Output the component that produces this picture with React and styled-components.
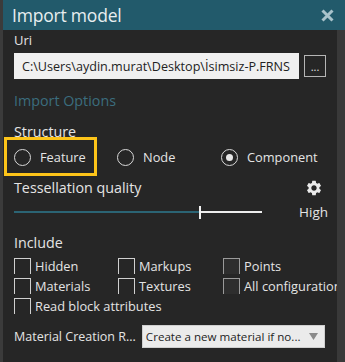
import React from "react";
import styled, { createGlobalStyle } from "styled-components";

const Global = createGlobalStyle`
  html, body { margin: 0; padding: 0; background: #262626; }
  * { box-sizing: border-box; }
`;

const Window = styled.div`
  width: 345px;
  height: 362px;
  overflow: hidden;
  display: flex;
  flex-direction: column;
  background: #262626;
  font-family: "Open Sans", "Noto Sans", sans-serif;
  color: #e2e2e2;
  border-left: 3px solid #3b3b3b;
`;

const Header = styled.div`
  height: 30px;
  flex: none;
  background: #225a6b;
  display: flex;
  align-items: center;
  justify-content: space-between;
  margin-left: -3px;
  padding: 0 11px 0 12px;
`;

const Title = styled.div`
  font-size: 17.5px;
  color: #e8eef0;
  letter-spacing: -0.2px;
`;

const BodyWrap = styled.div`
  flex: 1;
  display: flex;
  min-height: 0;
`;

const Body = styled.div`
  flex: 1;
  min-width: 0;
  padding: 1px 0 0 11px;
  display: flex;
  flex-direction: column;
  overflow: hidden;
`;

const ScrollStrip = styled.div`
  width: 8px;
  flex: none;
  background: #393939;
`;

const Label = styled.div`
  font-size: ${(p) => p.size || 14}px;
  color: ${(p) => p.color || "#e4e4e4"};
  line-height: ${(p) => p.lh || 18}px;
  margin-top: ${(p) => p.mt || 0}px;
  white-space: nowrap;
`;

const UriRow = styled.div`
  display: flex;
  align-items: center;
  gap: 5px;
  margin-top: 4px;
`;

const UriInput = styled.div`
  width: 285px;
  height: 26px;
  background: #f0f0f0;
  color: #222;
  font-size: 12.6px;
  display: flex;
  align-items: center;
  padding-left: 8px;
  white-space: nowrap;
  overflow: hidden;
`;

const BrowseBtn = styled.div`
  width: 22px;
  height: 22px;
  border: 1px solid #b5b5b5;
  color: #e0e0e0;
  font-size: 11px;
  display: flex;
  align-items: flex-end;
  justify-content: center;
  padding-bottom: 4px;
  line-height: 1;
`;

const RadioRow = styled.div`
  display: flex;
  align-items: center;
  height: 26px;
  margin-top: 2px;
`;

const RadioItem = styled.div`
  display: flex;
  align-items: center;
  gap: 9px;
  width: ${(p) => p.w}px;
  font-size: 12.8px;
  color: #e4e4e4;
  position: relative;
  height: 100%;
`;

const Highlight = styled.div`
  position: absolute;
  left: -10px;
  top: -7px;
  width: 93px;
  height: 39px;
  border: 3px solid #fcc419;
  pointer-events: none;
`;

const RadioCircle = styled.span`
  width: 17px;
  height: 17px;
  border-radius: 50%;
  border: 1.5px solid #d8d8d8;
  display: inline-flex;
  align-items: center;
  justify-content: center;
  flex: none;
  &::after {
    content: "";
    width: 7px;
    height: 7px;
    border-radius: 50%;
    background: #e8e8e8;
    display: ${(p) => (p.checked ? "block" : "none")};
  }
`;

const TessRow = styled.div`
  display: flex;
  justify-content: space-between;
  align-items: center;
  margin-top: 8px;
  padding-right: 14px;
`;

const SliderRow = styled.div`
  display: flex;
  align-items: center;
  justify-content: space-between;
  height: 20px;
  margin-top: 4px;
  padding-right: 9px;
`;

const Slider = styled.div`
  width: 248px;
  height: 14px;
  display: flex;
  align-items: center;
`;

const TrackFill = styled.div`
  height: 2px;
  background: #2b6474;
`;

const TrackRest = styled.div`
  height: 2px;
  flex: 1;
  background: #ededed;
`;

const Thumb = styled.div`
  width: 2px;
  height: 13px;
  background: #f2f2f2;
  flex: none;
`;

const CheckGrid = styled.div`
  display: grid;
  grid-template-columns: 104px 105px 1fr;
  row-gap: 4px;
  margin-top: 5px;
`;

const CheckItem = styled.div`
  display: flex;
  align-items: center;
  gap: 4px;
  height: 16px;
  font-size: 12.8px;
  color: #e4e4e4;
  white-space: nowrap;
  overflow: hidden;
  grid-column: ${(p) => p.span || "auto"};
`;

const Box = styled.span`
  width: 17px;
  height: 17px;
  border: 1px solid;
  flex: none;
  background: ${(p) => (p.dim ? "#2e2e2e" : "transparent")};
  border-color: ${(p) => (p.dim ? "#9a9a9a" : "#d0d0d0")};
`;

const MatRow = styled.div`
  display: flex;
  align-items: center;
  gap: 6px;
  margin-top: 11px;
`;

const Select = styled.div`
  width: 183px;
  height: 23px;
  background: #ebebeb;
  border: 1px solid #cfcfcf;
  color: #1e1e1e;
  font-size: 11.6px;
  display: flex;
  align-items: center;
  justify-content: space-between;
  padding: 0 6px 0 3px;
  white-space: nowrap;
`;

const CloseIcon = () => (
  <svg width="13" height="13" viewBox="0 0 13 13">
    <path d="M1.5 1.5L11.5 11.5M11.5 1.5L1.5 11.5" stroke="#a9c3cb" strokeWidth="3" />
  </svg>
);

const Gear = () => (
  <svg width="18" height="18" viewBox="0 0 24 24" fill="#eaeaea">
    <path d="M19.14 12.94c.04-.3.06-.61.06-.94 0-.32-.02-.64-.07-.94l2.03-1.58a.49.49 0 0 0 .12-.61l-1.92-3.32a.488.488 0 0 0-.59-.22l-2.39.96c-.5-.38-1.03-.7-1.62-.94l-.36-2.54a.484.484 0 0 0-.48-.41h-3.84c-.24 0-.43.17-.47.41l-.36 2.54c-.59.24-1.13.57-1.62.94l-2.39-.96c-.22-.08-.47 0-.59.22L2.74 8.87c-.12.21-.08.47.12.61l2.03 1.58c-.05.3-.09.63-.09.94s.02.64.07.94l-2.03 1.58a.49.49 0 0 0-.12.61l1.92 3.32c.12.22.37.29.59.22l2.39-.96c.5.38 1.03.7 1.62.94l.36 2.54c.05.24.24.41.48.41h3.84c.24 0 .44-.17.47-.41l.36-2.54c.59-.24 1.13-.56 1.62-.94l2.39.96c.22.08.47 0 .59-.22l1.92-3.32c.12-.22.07-.47-.12-.61l-2.01-1.58zM12 15.6c-1.98 0-3.6-1.62-3.6-3.6s1.62-3.6 3.6-3.6 3.6 1.62 3.6 3.6-1.62 3.6-3.6 3.6z" />
  </svg>
);

export default function App() {
  return (
    <>
      <Global />
      <Window>
        <Header>
          <Title>Import model</Title>
          <CloseIcon />
        </Header>
        <BodyWrap>
          <Body>
            <Label size={13}>Uri</Label>
            <UriRow>
              <UriInput>C:\Users\aydin.murat\Desktop\İsimsiz-P.FRNS</UriInput>
              <BrowseBtn>...</BrowseBtn>
            </UriRow>
            <Label size={14.3} color="#3b6d7e" mt={12} lh={20}>Import Options</Label>
            <Label size={14.3} mt={11} lh={20}>Structure</Label>
            <RadioRow>
              <RadioItem w={103}>
                <Highlight />
                <RadioCircle />
                Feature
              </RadioItem>
              <RadioItem w={104}>
                <RadioCircle />
                Node
              </RadioItem>
              <RadioItem w={110}>
                <RadioCircle checked />
                Component
              </RadioItem>
            </RadioRow>
            <TessRow>
              <Label size={14.3} lh={20}>Tessellation quality</Label>
              <Gear />
            </TessRow>
            <SliderRow>
              <Slider>
                <TrackFill style={{ width: "185px" }} />
                <Thumb />
                <TrackRest />
              </Slider>
              <Label size={13.5}>High</Label>
            </SliderRow>
            <Label size={14.3} mt={11} lh={20}>Include</Label>
            <CheckGrid>
              <CheckItem><Box />Hidden</CheckItem>
              <CheckItem><Box />Markups</CheckItem>
              <CheckItem><Box dim />Points</CheckItem>
              <CheckItem><Box />Materials</CheckItem>
              <CheckItem><Box />Textures</CheckItem>
              <CheckItem><Box dim />All configurations</CheckItem>
              <CheckItem span="1 / span 3"><Box />Read block attributes</CheckItem>
            </CheckGrid>
            <MatRow>
              <Label size={12.5}>Material Creation R...</Label>
              <Select>
                <span>Create a new material if no...</span>
                <svg width="9" height="7" viewBox="0 0 9 7"><path d="M0 0h9L4.5 7z" fill="#8a8a8a" /></svg>
              </Select>
            </MatRow>
          </Body>
          <ScrollStrip />
        </BodyWrap>
      </Window>
    </>
  );
}
